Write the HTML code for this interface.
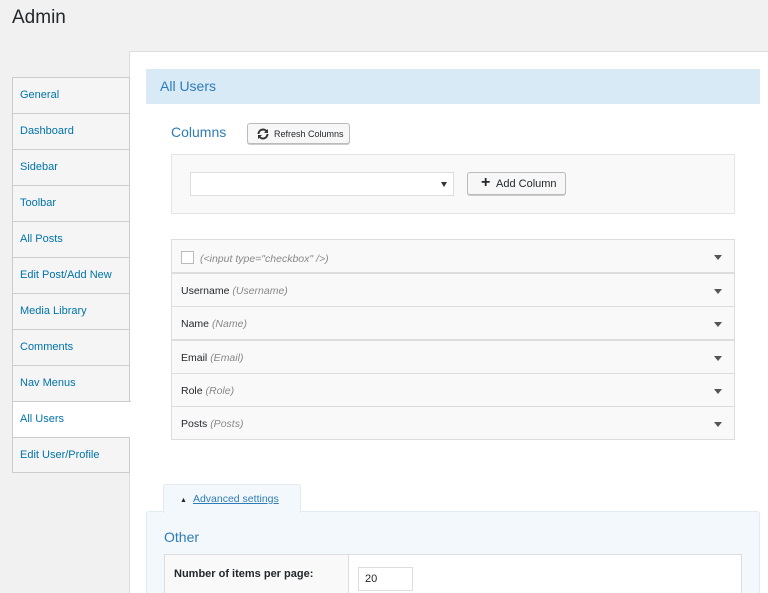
<!DOCTYPE html><html style="height:593px;overflow:hidden"><head><style>
body{margin:0;width:768px;height:593px;overflow:hidden;background:#f1f1f1;font-family:"Liberation Sans",sans-serif;font-size:11px;color:#23282d;position:relative}
.a{position:absolute;box-sizing:border-box}
.nav{left:12px;width:118px;height:36px;border:1px solid #ccc;border-bottom:none;background:#f5f5f5;color:#0073aa;padding:11px 0 0 7px}
.row{left:171px;width:564px;height:34px;border:1px solid #ddd;background:#f9f9f9;padding:11px 0 0 9px;font-size:10.5px}
.row i{color:#888}
.row:after{content:"";position:absolute;right:12px;top:15px;border:4px solid transparent;border-top:5px solid #555}
.btn{border:1px solid #bbb;border-radius:3px;background:#f7f7f7;box-shadow:0 1px 0 #ccc}
</style></head><body>
<div class="a" style="left:12px;top:7px;font-size:19px;color:#23282d">Admin</div>
<div class="a" style="left:129px;top:51px;width:639px;height:542px;background:#fff;border-top:1px solid #ddd;border-left:1px solid #ddd"></div>
<div class="a nav" style="top:77px">General</div>
<div class="a nav" style="top:113px">Dashboard</div>
<div class="a nav" style="top:149px">Sidebar</div>
<div class="a nav" style="top:185px">Toolbar</div>
<div class="a nav" style="top:221px">All Posts</div>
<div class="a nav" style="top:257px">Edit Post/Add New</div>
<div class="a nav" style="top:293px">Media Library</div>
<div class="a nav" style="top:329px">Comments</div>
<div class="a nav" style="top:365px">Nav Menus</div>
<div class="a nav" style="top:401px;background:#fff;border-right:none;width:119px">All Users</div>
<div class="a nav" style="top:437px;border-bottom:1px solid #ccc">Edit User/Profile</div>
<div class="a" style="left:146px;top:69px;width:614px;height:35px;background:#d9eaf7;color:#2e7cb5;font-size:14px;padding:9px 0 0 14px">All Users</div>
<div class="a" style="left:171px;top:124px;font-size:14px;color:#2e7cb5">Columns</div>
<div class="a btn" style="left:247px;top:123px;width:103px;height:21px;font-size:9px;padding:5px 0 0 26px">Refresh Columns
<svg style="position:absolute;left:8px;top:3px" width="14" height="14" viewBox="0 0 14 14"><path d="M2.5 7a4.5 4.5 0 0 1 8.3-2.4M11.5 7a4.5 4.5 0 0 1-8.3 2.4" stroke="#333" stroke-width="2" fill="none"/><path d="M12 2v4H8zM2 12V8h4z" fill="#333"/></svg></div>
<div class="a" style="left:171px;top:154px;width:564px;height:60px;background:#f9f9f9;border:1px solid #e5e5e5"></div>
<div class="a" style="left:190px;top:172px;width:264px;height:24px;background:#fff;border:1px solid #ddd"><div class="a" style="right:6px;top:9px;border:3.5px solid transparent;border-top:5px solid #333"></div></div>
<div class="a btn" style="left:467px;top:172px;width:99px;height:23px;padding:5px 0 0 28px;font-size:11px">Add Column<span class="a" style="left:13px;top:3px;font-size:16px;font-weight:bold;line-height:14px">+</span></div>
<div class="a row" style="top:239px"><span style="display:inline-block;width:11px;height:11px;border:1px solid #bbb;vertical-align:-2px;margin-right:6px;background:#fff"></span><i>(&lt;input type="checkbox" /&gt;)</i></div>
<div class="a row" style="top:273px">Username <i>(Username)</i></div>
<div class="a row" style="top:306px">Name <i>(Name)</i></div>
<div class="a row" style="top:340px">Email <i>(Email)</i></div>
<div class="a row" style="top:373px">Role <i>(Role)</i></div>
<div class="a row" style="top:406px">Posts <i>(Posts)</i></div>
<div class="a" style="left:146px;top:511px;width:614px;height:82px;background:#f3f8fc;border:1px solid #e3ebf2;border-bottom:none;border-radius:3px 3px 0 0"></div>
<div class="a" style="left:163px;top:484px;width:138px;height:29px;background:#f3f8fc;border:1px solid #e3ebf2;border-bottom:none;border-radius:3px 3px 0 0;padding:8px 0 0 16px;font-size:10.5px"><span style="font-size:7px;margin-right:6px">▲</span><span style="color:#2e7cb5;text-decoration:underline">Advanced settings</span></div>
<div class="a" style="left:164px;top:529px;font-size:14px;color:#2e7cb5">Other</div>
<div class="a" style="left:164px;top:554px;width:578px;height:39px;background:#fff;border:1px solid #ddd;border-bottom:none"></div>
<div class="a" style="left:164px;top:554px;width:185px;height:39px;background:#f9f9f9;border:1px solid #ddd;border-bottom:none;padding:13px 0 0 9px;font-weight:bold;font-size:11px">Number of items per page:</div>
<div class="a" style="left:358px;top:567px;width:55px;height:24px;border:1px solid #ddd;background:#fff;padding:5px 0 0 6px;font-size:11px">20</div>
</body></html>
